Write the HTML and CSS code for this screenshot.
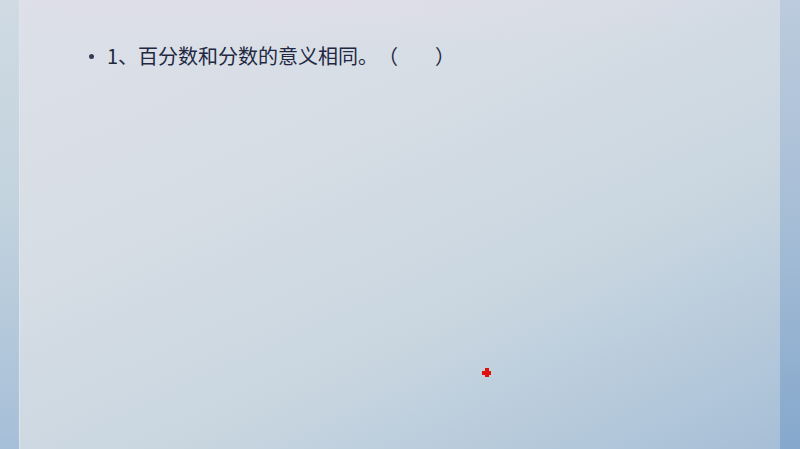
FILE: index.html
```
<!DOCTYPE html>
<html lang="zh-CN">
<head>
    <meta charset="UTF-8">
    <meta name="viewport" content="width=device-width, initial-scale=1.0">
    <title>百分数的意义</title>
    <link rel="stylesheet" href="styles.css">
</head>
<body>
    <div class="frame">
        <div class="side side-left"></div>
        <div class="slide">
            <ul class="points">
                <li>1、百分数和分数的意义相同。（<span class="blank"></span>）</li>
            </ul>
            <span class="pointer"></span>
        </div>
        <div class="side side-right"></div>
    </div>
</body>
</html>
```

FILE: styles.css
```
body {
    margin: 0;
    padding: 0;
    font-family: "Noto Sans CJK SC", "Noto Sans", sans-serif;
    overflow: hidden;
}
.frame {
    display: flex;
    width: 800px;
    height: 449px;
}
.side {
    width: 20px;
    flex-shrink: 0;
}
.side-left {
    background: linear-gradient(to bottom, #cfdae3 0%, #c3d3de 45%, #a6bfd8 100%);
    border-right: 1px solid #dde5ec;
    width: 19px;
}
.side-right {
    background: linear-gradient(to bottom, #bccbdd 0%, #a6bdd6 50%, #85a8cc 100%);
}
.slide {
    flex: 1;
    position: relative;
    background:
        radial-gradient(ellipse 60% 10% at 40% 0%, rgba(226, 220, 234, 0.6), rgba(226, 220, 234, 0)),
        linear-gradient(155deg, #dde0e8 0%, #d6dde5 35%, #c9d6e0 65%, #b2c7da 88%, #a6bed6 100%);
}
.points {
    list-style: none;
    margin: 0;
    padding: 42px 0 0 68px;
}
.points li {
    position: relative;
    padding-left: 19px;
    font-size: 20px;
    line-height: 28px;
    color: #232842;
    text-spacing-trim: space-all;
}
.points li::before {
    content: "";
    position: absolute;
    left: 1px;
    top: 12px;
    width: 5px;
    height: 5px;
    border-radius: 50%;
    background: #363b55;
}
.blank {
    display: inline-block;
    width: 37px;
}
.pointer {
    position: absolute;
    left: 462px;
    top: 368px;
    width: 9px;
    height: 9px;
    background:
        linear-gradient(#e0100c, #e0100c) center / 9px 4px no-repeat,
        linear-gradient(#e0100c, #e0100c) center / 4px 9px no-repeat;
}
```
